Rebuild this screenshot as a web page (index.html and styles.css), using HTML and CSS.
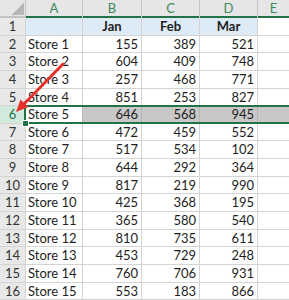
FILE: index.html
```html
<!DOCTYPE html>
<html lang="en">

<head>
    <title>Stores</title>
    <meta charset="UTF-8">
    <link rel="stylesheet" href="styles.css">
</head>

<body>
    <div class="sheet">
        <div class="row cols">
            <div class="corner"></div>
            <div>A</div>
            <div>B</div>
            <div>C</div>
            <div>D</div>
            <div>E</div>
        </div>
        <div class="row title">
            <div class="rh">1</div>
            <div></div>
            <div>Jan</div>
            <div>Feb</div>
            <div>Mar</div>
            <div class="blank"></div>
        </div>
        <div class="row">
            <div class="rh">2</div><div class="t">Store 1</div><div class="n">155</div><div class="n">389</div><div class="n">521</div><div></div>
        </div>
        <div class="row">
            <div class="rh">3</div><div class="t">Store 2</div><div class="n">604</div><div class="n">409</div><div class="n">748</div><div></div>
        </div>
        <div class="row">
            <div class="rh">4</div><div class="t">Store 3</div><div class="n">257</div><div class="n">468</div><div class="n">771</div><div></div>
        </div>
        <div class="row">
            <div class="rh">5</div><div class="t">Store 4</div><div class="n">851</div><div class="n">253</div><div class="n">827</div><div></div>
        </div>
        <div class="row sel">
            <div class="rh">6</div><div class="t active">Store 5</div><div class="n">646</div><div class="n">568</div><div class="n">945</div><div></div>
        </div>
        <div class="row">
            <div class="rh">7</div><div class="t">Store 6</div><div class="n">472</div><div class="n">459</div><div class="n">552</div><div></div>
        </div>
        <div class="row">
            <div class="rh">8</div><div class="t">Store 7</div><div class="n">517</div><div class="n">534</div><div class="n">102</div><div></div>
        </div>
        <div class="row">
            <div class="rh">9</div><div class="t">Store 8</div><div class="n">644</div><div class="n">292</div><div class="n">364</div><div></div>
        </div>
        <div class="row">
            <div class="rh">10</div><div class="t">Store 9</div><div class="n">817</div><div class="n">219</div><div class="n">990</div><div></div>
        </div>
        <div class="row">
            <div class="rh">11</div><div class="t">Store 10</div><div class="n">425</div><div class="n">368</div><div class="n">195</div><div></div>
        </div>
        <div class="row">
            <div class="rh">12</div><div class="t">Store 11</div><div class="n">365</div><div class="n">580</div><div class="n">540</div><div></div>
        </div>
        <div class="row">
            <div class="rh">13</div><div class="t">Store 12</div><div class="n">810</div><div class="n">735</div><div class="n">611</div><div></div>
        </div>
        <div class="row">
            <div class="rh">14</div><div class="t">Store 13</div><div class="n">453</div><div class="n">729</div><div class="n">248</div><div></div>
        </div>
        <div class="row">
            <div class="rh">15</div><div class="t">Store 14</div><div class="n">760</div><div class="n">706</div><div class="n">931</div><div></div>
        </div>
        <div class="row">
            <div class="rh">16</div><div class="t">Store 15</div><div class="n">553</div><div class="n">183</div><div class="n">866</div><div></div>
        </div>

        <!-- red pointer drawn over the sheet -->
        <svg class="arrow" width="289" height="300" viewBox="0 0 289 300">
            <line x1="63" y1="64" x2="24" y2="104" stroke="#e5322b" stroke-width="3" stroke-linecap="round" />
            <polygon points="16,112 20.5,99.5 28.5,107" fill="#e5322b" />
        </svg>
    </div>
</body>

</html>
```

FILE: styles.css
```css
html,
body {
    margin: 0;
}

body {
    width: 289px;
    height: 300px;
    overflow: hidden;
    background-color: #fff;
    color: #1e1e1e;
    font-family: Lato, "Open Sans", sans-serif;
    font-size: 13px;
}

.sheet {
    position: relative;
    display: flex;
    flex-direction: column;
    gap: 1px;
    height: 300px;
    background-color: #d4d4d4;
}

.row {
    display: grid;
    grid-template-columns: 25px 56px 58px 57px 57px 1fr;
    column-gap: 1px;
    height: 16.65px;
    line-height: 16.65px;
    flex: none;
}

.row > div {
    background-color: #fff;
    white-space: nowrap;
    overflow: hidden;
}

/* column headers */
.cols {
    height: 18px;
    margin-bottom: -1px;
    background-color: #c4c4c4;
}

.cols > div {
    box-sizing: border-box;
    background-color: #e6e6e6;
    color: #3b8a5c;
    text-align: center;
    line-height: 16px;
    border-bottom: 2px solid #217346;
}

.cols > .corner {
    border-bottom-color: #c4c4c4;
    background: linear-gradient(135deg, transparent 50%, #b7b7b7 50%) no-repeat right 1px bottom 1px / 12px 12px, #e6e6e6;
}

/* row headers */
.row > .rh {
    background-color: #e8e8e8;
    color: #333;
    text-align: center;
}

.title > div:nth-child(n+2):nth-child(-n+5) {
    background-color: #ddebf7;
    font-weight: bold;
    text-align: center;
}

.t {
    padding-left: 2px;
}

.n {
    text-align: right;
    padding-right: 3px;
}

/* selected row 6 */
.sel {
    position: relative;
    background-color: #b6b6b6;
}

.sel > div {
    background-color: #c8c8c8 !important;
}

.sel > .active {
    background-color: #fff !important;
}

.sel > .rh {
    background-color: #d2eadb !important;
    color: #217346;
}

.sel::after {
    content: "";
    position: absolute;
    left: 24px;
    right: 0;
    top: -1px;
    bottom: -1px;
    border: 2px solid #217346;
    border-right: 0;
}

.sel::before {
    content: "";
    position: absolute;
    left: 22px;
    bottom: -4px;
    width: 5px;
    height: 5px;
    background-color: #217346;
    border: 1px solid #fff;
    z-index: 1;
}

.arrow {
    position: absolute;
    left: 0;
    top: 0;
    pointer-events: none;
    z-index: 2;
}
```
